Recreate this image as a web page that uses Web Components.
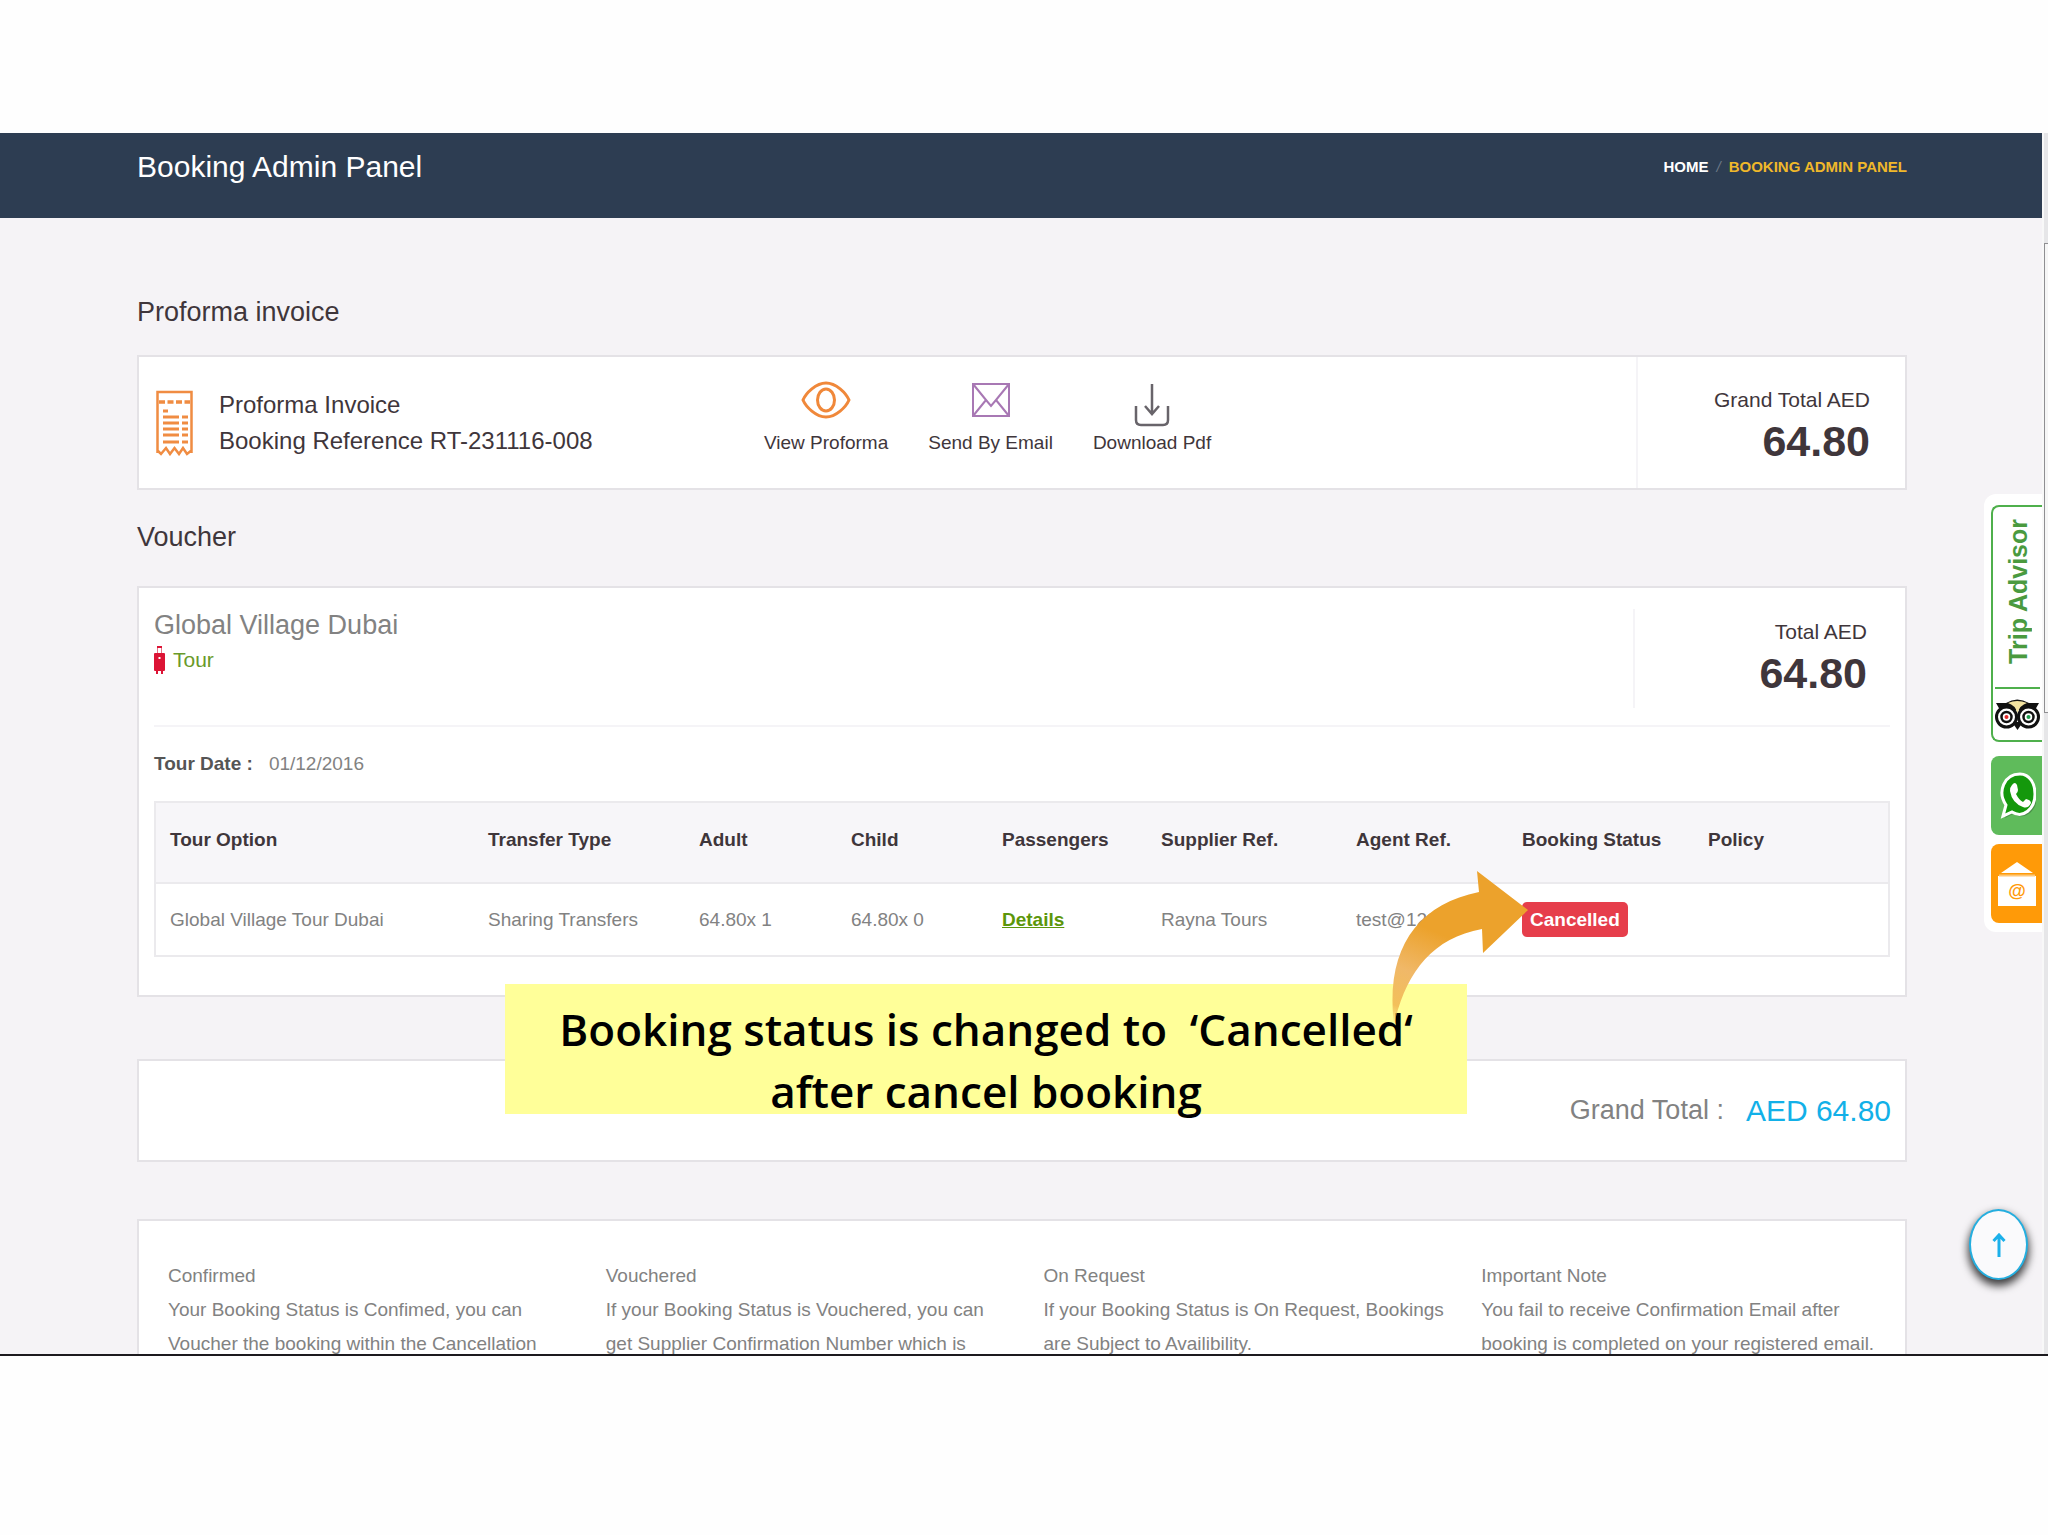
<!DOCTYPE html>
<html lang="en">
<head>
<meta charset="utf-8">
<title>Booking Admin Panel</title>
<style>
  :root {
    --text-crumb: 15px;
    --text-base: 19px;
    --text-sub: 21px;
    --text-lead: 24px;
    --text-heading: 27px;
    --text-title: 30px;
    --text-amount: 43px;
    --ink: #3f363b;
    --muted: #828282;
    --line: #e4e2e6;
    --gutter: 135px;
  }

  body {
    margin: 0;
    background: #fefefe;
    color: var(--ink);
    font-family: "Liberation Sans", Arial, sans-serif;
    font-size: var(--text-base);
  }
</style>
</head>
<body>
<booking-app>
  <page-header slot="header" heading="Booking Admin Panel"></page-header>

  <section-title>Proforma invoice</section-title>
  <invoice-card></invoice-card>

  <section-title roomy>Voucher</section-title>
  <voucher-card></voucher-card>

  <grand-total amount="AED 64.80">Grand Total :</grand-total>

  <status-notes>
    <status-note heading="Confirmed">Your Booking Status is Confimed, you can<br>Voucher the booking within the Cancellation</status-note>
    <status-note heading="Vouchered">If your Booking Status is Vouchered, you can<br>get Supplier Confirmation Number which is</status-note>
    <status-note heading="On Request">If your Booking Status is On Request, Bookings<br>are Subject to Availibility.</status-note>
    <status-note heading="Important Note">You fail to receive Confirmation Email after<br>booking is completed on your registered email.</status-note>
  </status-notes>

  <side-rail slot="overlay"></side-rail>
  <back-to-top slot="overlay"></back-to-top>
</booking-app>

<script>
  // Small helper: open shadow root filled from a template
  function attach(host, html) {
    const template = document.createElement("template")
    template.innerHTML = html
    const shadow = host.attachShadow({ mode: "open" })
    shadow.append(template.content.cloneNode(true))
    return shadow
  }

  class BookingApp extends HTMLElement {
    constructor() {
      super()
      attach(this, `
        <style>
          :host {
            display: flex;
            box-sizing: border-box;
            height: 100vh;
            padding: 133px 0 179px;
          }

          #frame {
            position: relative;
            display: flex;
            flex: 1;
            overflow: hidden;
            border-bottom: 2px solid #1c1a1e;
            background: #f5f3f6;
          }

          #page {
            flex: 1;
            min-width: 0;
          }

          main {
            padding: 74px var(--gutter) 0 137px;
          }

          #scrollbar {
            width: 6px;
            box-sizing: border-box;
            padding: 110px 0 0 2px;
            background: linear-gradient(90deg, #f8f8f8 2px, #e6e6e8 2px);
          }

          #thumb {
            height: 468px;
            border: solid #8f8f92;
            border-width: 1px 0 1px 1px;
            background: #f6f6f6;
          }
        </style>
        <div id="frame">
          <div id="page">
            <slot name="header"></slot>
            <main><slot></slot></main>
          </div>
          <div id="scrollbar"><div id="thumb"></div></div>
          <slot name="overlay"></slot>
        </div>
      `)
    }
  }

  class PageHeader extends HTMLElement {
    constructor() {
      super()
      const shadow = attach(this, `
        <style>
          :host {
            display: block;
            background: #2d3d52;
          }

          header {
            display: flex;
            justify-content: space-between;
            align-items: center;
            padding: 0 var(--gutter) 17px 137px;
            line-height: 68px;
          }

          h1 {
            margin: 0;
            color: #fff;
            font-size: var(--text-title);
            font-weight: 400;
          }

          nav {
            display: flex;
            gap: 8px;
            font-size: var(--text-crumb);
            font-weight: 700;
            color: #6c7886;
          }

          i { font-weight: 400; }

          a {
            color: #fff;
            text-decoration: none;
          }

          a[aria-current] { color: #f0b82a; }
        </style>
        <header>
          <h1></h1>
          <nav>
            <a href="#">HOME</a><i>/</i><a href="#" aria-current="page">BOOKING ADMIN PANEL</a>
          </nav>
        </header>
      `)
      shadow.querySelector("h1").textContent = this.getAttribute("heading")
    }
  }

  class SectionTitle extends HTMLElement {
    constructor() {
      super()
      attach(this, `
        <style>
          :host {
            display: block;
            margin-bottom: 23px;
          }

          :host([roomy]) { margin: 27px 0 29px; }

          h2 {
            margin: 0;
            font-size: var(--text-heading);
            font-weight: 400;
            line-height: 40px;
          }
        </style>
        <h2><slot></slot></h2>
      `)
    }
  }

  class PriceTotal extends HTMLElement {
    constructor() {
      super()
      const shadow = attach(this, `
        <style>
          :host {
            display: block;
            text-align: right;
          }

          span {
            display: block;
            font-size: var(--text-sub);
            line-height: 32px;
          }

          strong {
            display: block;
            font-size: var(--text-amount);
            line-height: 50px;
          }
        </style>
        <span><slot></slot></span>
        <strong></strong>
      `)
      shadow.querySelector("strong").textContent = this.getAttribute("amount")
    }
  }

  class InvoiceCard extends HTMLElement {
    constructor() {
      super()
      attach(this, `
        <style>
          :host {
            display: grid;
            grid-template-columns: 625px 1fr 269px;
            align-items: center;
            height: 131px;
            border: 2px solid var(--line);
            background: #fff;
          }

          #reference {
            display: flex;
            align-items: center;
            gap: 26px;
            padding-left: 17px;
            font-size: var(--text-lead);
            line-height: 36px;
          }

          p { margin: 0; }

          svg {
            display: block;
            fill: none;
          }

          #actions {
            display: flex;
            gap: 40px;
            padding-bottom: 16px;
          }

          button {
            display: grid;
            grid-template-rows: 56px 30px;
            justify-items: center;
            align-items: center;
            padding: 0;
            border: 0;
            background: none;
            color: inherit;
            font: inherit;
            line-height: 30px;
          }

          #total {
            display: grid;
            align-content: center;
            align-self: stretch;
            padding: 4px 35px 0 0;
            border-left: 2px solid #f5f4f7;
          }
        </style>
        <div id="reference">
          <svg width="37" height="66" viewBox="0 0 37 66" stroke="#f08c42" stroke-width="2">
            <path d="M1.500 63V2H35.500V63M1 60l4 4 5-6 4 6 4.500-6 4.500 6 4-6 4 6 5-4" stroke-width="2.500"/>
            <path d="M3 12H34" stroke-dasharray="6 2.500" stroke-width="3.500"/>
            <path d="M7 21h5M7 27h16M26 27h6M7 33h16M26 33h6M7 39h16M26 39h6M7 45h16M26 45h6M7 52h16M26 52h6" stroke-width="3"/>
          </svg>
          <p>Proforma Invoice<br>Booking Reference RT-231116-008</p>
        </div>
        <div id="actions">
          <button type="button">
            <svg width="50" height="38" viewBox="0 0 50 38" stroke="#f0883a" stroke-width="3">
              <path d="M2 19C5 12 15 2 25 2s20 10 23 17C45 26 35 36 25 36S5 26 2 19z"/>
              <ellipse cx="25" cy="19" rx="8.500" ry="11"/>
            </svg>
            View Proforma
          </button>
          <button type="button">
            <svg width="38" height="34" viewBox="0 0 38 34" stroke="#a878b4" stroke-width="2">
              <path d="M1 1H37V33H1zM1 1l13 16 5 6 5-6L37 1M1 33l13-16M37 33L24 17"/>
            </svg>
            Send By Email
          </button>
          <button type="button">
            <svg width="36" height="54" viewBox="0 -10 36 54" stroke="#68646a" stroke-width="2.500">
              <path d="M18 1v30M11 23l7 8 7-8M2 23v14q0 5 5 5h22q5 0 5-5V23"/>
            </svg>
            Download Pdf
          </button>
        </div>
        <div id="total"><price-total amount="64.80">Grand Total AED</price-total></div>
      `)
    }
  }

  class VoucherCard extends HTMLElement {
    constructor() {
      super()
      attach(this, `
        <style>
          :host {
            display: block;
            padding: 17px 15px 38px;
            border: 2px solid var(--line);
            background: #fff;
          }

          #summary {
            display: flex;
            justify-content: space-between;
            height: 120px;
            border-bottom: 2px solid #f5f4f7;
          }

          h3 {
            margin: 0;
            color: var(--muted);
            font-size: var(--text-heading);
            font-weight: 400;
            line-height: 40px;
          }

          #kind {
            display: flex;
            align-items: center;
            gap: 8px;
            color: #6a9a2a;
            font-size: var(--text-sub);
            line-height: 30px;
          }

          #total {
            width: 232px;
            height: 84px;
            margin-top: 4px;
            padding: 7px 23px 8px 0;
            border-left: 2px solid #f5f4f7;
          }

          #date {
            display: flex;
            gap: 16px;
            margin: 0;
            padding: 22px 0;
            line-height: 30px;
            color: var(--muted);
          }

          #date b {
            color: #555;
          }
        </style>
        <div id="summary">
          <div>
            <h3>Global Village Dubai</h3>
            <div id="kind">
              <svg width="11" height="28" viewBox="0 0 11 28" fill="#dc1435">
                <path d="M3 0h5v2H3z"/>
                <path d="M3.500 2v6M7.500 2v6" stroke="#e8748a"/>
                <path d="M1 7h9q1 0 1 1v16q0 1-1 1H1q-1 0-1-1V8q0-1 1-1zM2 25h2v3H2zM7 25h2v3H7z"/>
                <path d="M4.500 11h2v2h-2z" fill="#fff"/>
              </svg>
              Tour
            </div>
          </div>
          <div id="total"><price-total amount="64.80">Total AED</price-total></div>
        </div>
        <p id="date"><b>Tour Date :</b>01/12/2016</p>
        <tour-table></tour-table>
      `)
    }
  }

  class TourTable extends HTMLElement {
    constructor() {
      super()
      attach(this, `
        <style>
          :host {
            display: block;
            position: relative;
          }

          table {
            width: 100%;
            table-layout: fixed;
            border: 2px solid #ebeaed;
            border-spacing: 0;
            box-sizing: border-box;
          }

          th, td {
            box-sizing: border-box;
            padding: 0 0 0 14px;
            text-align: left;
            white-space: nowrap;
          }

          th {
            height: 81px;
            padding-bottom: 6px;
            border-bottom: 2px solid #ebeaed;
            background: #f7f6f9;
          }

          td {
            height: 71px;
            color: var(--muted);
          }

          a {
            color: #5c960a;
            font-weight: 700;
          }

          .badge {
            display: inline-block;
            padding: 0 8px;
            border-radius: 5px;
            background: #e63e4b;
            color: #fff;
            font-weight: 700;
            line-height: 35px;
          }

          /* Annotation lies over the table and the cards below it */
          change-callout {
            position: absolute;
            left: 351px;
            top: 183px;
            z-index: 1;
          }
        </style>
        <table>
          <colgroup>
            <col style="width: 318px"><col style="width: 211px"><col style="width: 152px">
            <col style="width: 151px"><col style="width: 159px"><col style="width: 195px">
            <col style="width: 166px"><col style="width: 186px"><col>
          </colgroup>
          <thead>
            <tr>
              <th>Tour Option</th><th>Transfer Type</th><th>Adult</th><th>Child</th><th>Passengers</th>
              <th>Supplier Ref.</th><th>Agent Ref.</th><th>Booking Status</th><th>Policy</th>
            </tr>
          </thead>
          <tbody>
            <tr>
              <td>Global Village Tour Dubai</td><td>Sharing Transfers</td><td>64.80x 1</td><td>64.80x 0</td>
              <td><a href="#">Details</a></td><td>Rayna Tours</td><td>test@123</td>
              <td><span class="badge">Cancelled</span></td><td></td>
            </tr>
          </tbody>
        </table>
        <change-callout>Booking status is changed to&nbsp; ‘Cancelled‘<br>after cancel booking</change-callout>
      `)
    }
  }

  class ChangeCallout extends HTMLElement {
    constructor() {
      super()
      attach(this, `
        <style>
          :host {
            display: block;
            box-sizing: border-box;
            width: 962px;
            height: 130px;
            padding-top: 14px;
            background: #ffff99;
            color: #000;
            font: 600 44px/62px "Open Sans", "Noto Sans", sans-serif;
            text-align: center;
            white-space: nowrap;
          }

          svg {
            position: absolute;
            right: -62px;
            top: -114px;
          }
        </style>
        <slot></slot>
        <svg width="138" height="156" viewBox="1390 870 138 156">
          <linearGradient id="fade" gradientUnits="userSpaceOnUse" x1="1430" y1="930" x2="1390" y2="1026">
            <stop offset="0" stop-color="#eca22c"/>
            <stop offset=".45" stop-color="#f0b868"/>
            <stop offset=".8" stop-color="#f3c05a"/>
            <stop offset="1" stop-color="#f3c05a" stop-opacity="0"/>
          </linearGradient>
          <path fill="url(#fade)" d="M1393 1025C1384 950 1415 905 1478 892L1476 871 1527 910 1482 953 1481 929C1430 938 1404 975 1393 1025z"/>
        </svg>
      `)
    }
  }

  class GrandTotal extends HTMLElement {
    constructor() {
      super()
      const shadow = attach(this, `
        <style>
          :host {
            display: flex;
            justify-content: flex-end;
            align-items: center;
            gap: 22px;
            height: 99px;
            margin: 62px 0 57px;
            padding: 0 14px;
            border: 2px solid var(--line);
            background: #fff;
            color: var(--muted);
            font-size: var(--text-heading);
          }

          output {
            color: #12b0e8;
            font-size: var(--text-title);
          }
        </style>
        <slot></slot>
        <output></output>
      `)
      shadow.querySelector("output").textContent = this.getAttribute("amount")
    }
  }

  class StatusNotes extends HTMLElement {
    constructor() {
      super()
      attach(this, `
        <style>
          :host {
            display: grid;
            grid-template-columns: repeat(4, minmax(0, 1fr));
            column-gap: 14px;
            padding: 38px 0 60px 29px;
            border: 2px solid var(--line);
            background: #fff;
          }
        </style>
        <slot></slot>
      `)
    }
  }

  class StatusNote extends HTMLElement {
    constructor() {
      super()
      const shadow = attach(this, `
        <style>
          :host {
            display: block;
            color: var(--muted);
            line-height: 34px;
            white-space: nowrap;
          }

          h4, p {
            margin: 0;
            font-size: var(--text-base);
            font-weight: 400;
          }
        </style>
        <h4></h4>
        <p><slot></slot></p>
      `)
      shadow.querySelector("h4").textContent = this.getAttribute("heading")
    }
  }

  class SideRail extends HTMLElement {
    constructor() {
      super()
      attach(this, `
        <style>
          :host {
            position: absolute;
            right: 6px;
            top: 361px;
            display: grid;
            gap: 9px;
            padding: 11px 0 9px 7px;
            border-radius: 12px 0 0 12px;
            background: #fff;
          }

          a {
            display: grid;
            place-items: center;
            box-sizing: border-box;
            width: 51px;
            height: 79px;
            border-radius: 8px 0 0 8px;
          }

          #trip {
            grid-template-rows: 180px 1fr;
            height: 237px;
            margin-bottom: 5px;
            border: 2px solid #4fb04c;
            border-right: 0;
            color: #4a9a3f;
            font: 700 25px/30px "Liberation Sans", Arial, sans-serif;
            text-decoration: none;
          }

          /* Reads from bottom to top */
          #trip span {
            writing-mode: vertical-rl;
            transform: rotate(180deg);
            padding-top: 12px;
          }

          #trip div {
            display: grid;
            place-items: center;
            align-self: stretch;
            border-top: 2px solid #4fb04c;
          }

          #whatsapp { background: #5fbb5b; }

          #mail { background: #ff9a08; }
        </style>
        <a id="trip" href="#">
          <span>Trip Advisor</span>
          <div>
            <svg width="45" height="34" viewBox="0 0 45 34">
              <path d="M1 5h10Q22-2 34 5h10l-4 7H5z" fill="#111"/>
              <path d="M13 5q9-4 19 0-7 2-9.500 10Q20 7 13 5z" fill="#f3e3a0"/>
              <path d="M17 24h11l-5.500 8z" fill="#111"/>
              <g stroke="#111" fill="#fff">
                <circle cx="11.500" cy="19" r="10" stroke-width="3"/>
                <circle cx="33.500" cy="19" r="10" stroke-width="3"/>
                <circle cx="11.500" cy="19" r="5" stroke-width="2.500"/>
                <circle cx="33.500" cy="19" r="5" stroke-width="2.500"/>
              </g>
              <circle cx="11.500" cy="19" r="2" fill="#e22b2b"/>
              <circle cx="33.500" cy="19" r="2" fill="#1c9c4c"/>
            </svg>
          </div>
        </a>
        <a id="whatsapp" href="#" aria-label="WhatsApp">
          <svg width="38" height="48" viewBox="-2 0 38 48">
            <path d="M5 46l3-11C-1 22 5 4 21 4c11 0 16 10 16 20 0 15-12 25-24 18z" fill="#3b6f3a" opacity=".6"/>
            <path d="M3 44l3-11C-3 20 4 2 20 2c10 0 15 10 15 20 0 15-12 25-23 18z" fill="#14980c" stroke="#fff" stroke-width="3"/>
            <path d="M12 13q3-4 5 0l1 5q0 2-2 4 3 6 7 8l3-3q5 1 5 4-3 6-8 4-11-4-13-16 0-4 2-6z" fill="#fff"/>
          </svg>
        </a>
        <a id="mail" href="#" aria-label="Email">
          <svg width="38" height="44" viewBox="0 0 38 44">
            <path d="M0 14H38V44H0zM3 11L19 0 35 11z" fill="#fff"/>
            <path d="M1 13.500H37" stroke="#ffc878" stroke-width="2"/>
            <text x="19" y="35" text-anchor="middle" font-family="Liberation Sans" font-size="18" font-weight="700" fill="#ff9a08">@</text>
          </svg>
        </a>
      `)
    }
  }

  class BackToTop extends HTMLElement {
    constructor() {
      super()
      attach(this, `
        <style>
          :host {
            position: absolute;
            right: 20px;
            bottom: 74px;
          }

          button {
            display: grid;
            place-items: center;
            width: 59px;
            height: 71px;
            padding: 0;
            border: 2px solid #24aedf;
            border-radius: 50%;
            background: #fafafc;
            box-shadow: 0 5px 9px 1px rgba(0, 0, 0, .75);
          }
        </style>
        <button type="button" aria-label="Back to top">
          <svg width="14" height="24" viewBox="0 0 14 24" fill="none" stroke="#1cb0ea" stroke-width="3">
            <path d="M7 24V3M1.500 8L7 2l5.500 6"/>
          </svg>
        </button>
      `)
    }
  }

  customElements.define("booking-app", BookingApp)
  customElements.define("page-header", PageHeader)
  customElements.define("section-title", SectionTitle)
  customElements.define("price-total", PriceTotal)
  customElements.define("invoice-card", InvoiceCard)
  customElements.define("voucher-card", VoucherCard)
  customElements.define("tour-table", TourTable)
  customElements.define("change-callout", ChangeCallout)
  customElements.define("grand-total", GrandTotal)
  customElements.define("status-notes", StatusNotes)
  customElements.define("status-note", StatusNote)
  customElements.define("side-rail", SideRail)
  customElements.define("back-to-top", BackToTop)
</script>
</body>
</html>
